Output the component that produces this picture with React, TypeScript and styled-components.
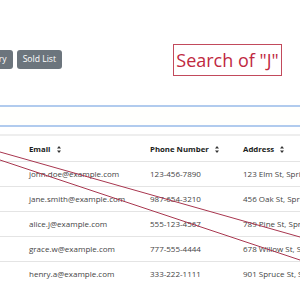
import React from "react";
import styled, { createGlobalStyle } from "styled-components";

const Global = createGlobalStyle`
  html, body { margin: 0; padding: 0; background: #ffffff; overflow: hidden; }
  body { font-family: "Open Sans", "Liberation Sans", sans-serif; }
`;

const Page = styled.div`
  position: relative;
  width: 300px;
  height: 300px;
  overflow: hidden;
  padding-top: 44px;
  box-sizing: border-box;
`;

const TopRow = styled.div`
  display: flex;
  align-items: center;
  height: 32px;
`;

const ButtonGroup = styled.div`
  display: flex;
  gap: 4px;
  margin-left: -28px;
  margin-top: -2px;
`;

const Btn = styled.button`
  height: 19px;
  padding: 0 6px;
  border: none;
  border-radius: 3px;
  background: #6c757d;
  color: #ffffff;
  font-family: "Open Sans", sans-serif;
  font-size: 8.6px;
  line-height: 19px;
  white-space: nowrap;
`;

const SearchLabel = styled.div`
  margin-left: auto;
  margin-right: 18px;
  width: 109px;
  height: 32px;
  box-sizing: border-box;
  border: 1px solid #c24a5c;
  color: #c0293f;
  font-family: "Open Sans", sans-serif;
  font-size: 18px;
  display: flex;
  align-items: center;
  justify-content: center;
  white-space: nowrap;
`;

const SearchInput = styled.div`
  margin-top: 29px;
  height: 18px;
  border-top: 2px solid #b1cbee;
  border-bottom: 2px solid #b1cbee;
  background: #fffffd;
`;

const Table = styled.table`
  margin-top: 7px;
  margin-left: -61px;
  border-collapse: collapse;
  table-layout: fixed;
  width: 460px;
  border-top: 2px solid #eeeeee;
  font-size: 8px;
`;

const Th = styled.th<{ $w: number }>`
  box-sizing: border-box;
  width: ${(p) => p.$w}px;
  text-align: left;
  padding: 1px 8px 0;
  height: 26px;
  color: #1a1d20;
  font-size: 7.8px;
  font-weight: 700;
  white-space: nowrap;
  overflow: hidden;
  border-bottom: 1px solid #e4e4e4;
`;

const Td = styled.td`
  box-sizing: border-box;
  padding: 0 8px;
  height: 25px;
  color: #444444;
  white-space: nowrap;
  overflow: hidden;
  border-bottom: 1px solid #e4e4e4;
`;

const Tr = styled.tr`
  &:last-child td { border-bottom: none; }
`;

const SortIcon = styled.svg`
  margin-left: 4px;
  vertical-align: -1px;
`;

const Overlay = styled.svg`
  position: absolute;
  left: 0;
  top: 0;
  pointer-events: none;
`;

const Sort = () => (
  <SortIcon width="4" height="7" viewBox="0 0 4 7">
    <path d="M2 0 L4 2.6 L0 2.6 Z M2 7 L4 4.4 L0 4.4 Z" fill="#333" />
  </SortIcon>
);

const rows = [
  ["John Doe", "john.doe@example.com", "123-456-7890", "123 Elm St, Springfield, IL"],
  ["Jane Smith", "jane.smith@example.com", "987-654-3210", "456 Oak St, Springfield, IL"],
  ["Alice Johnson", "alice.j@example.com", "555-123-4567", "789 Pine St, Springfield, IL"],
  ["Grace Wilson", "grace.w@example.com", "777-555-4444", "678 Willow St, Springfield, IL"],
  ["Henry Adams", "henry.a@example.com", "333-222-1111", "901 Spruce St, Springfield, IL"],
];

export default function App() {
  return (
    <Page>
      <Global />
      <TopRow>
        <ButtonGroup>
          <Btn>History</Btn>
          <Btn>Sold List</Btn>
        </ButtonGroup>
        <SearchLabel>Search of "J"</SearchLabel>
      </TopRow>
      <SearchInput />
      <Table>
        <thead>
          <tr>
            <Th $w={82}>Name <Sort /></Th>
            <Th $w={121}>Email <Sort /></Th>
            <Th $w={93}>Phone Number <Sort /></Th>
            <Th $w={164}>Address <Sort /></Th>
          </tr>
        </thead>
        <tbody>
          {rows.map((r) => (
            <Tr key={r[1]}>
              {r.map((c) => (
                <Td key={c}>{c}</Td>
              ))}
            </Tr>
          ))}
        </tbody>
      </Table>
      <Overlay width="300" height="300" viewBox="0 0 300 300">
        <line x1="0" y1="152" x2="300" y2="237" stroke="#a8364f" strokeWidth="1" />
        <line x1="0" y1="160" x2="300" y2="260" stroke="#a8364f" strokeWidth="1" />
      </Overlay>
    </Page>
  );
}
